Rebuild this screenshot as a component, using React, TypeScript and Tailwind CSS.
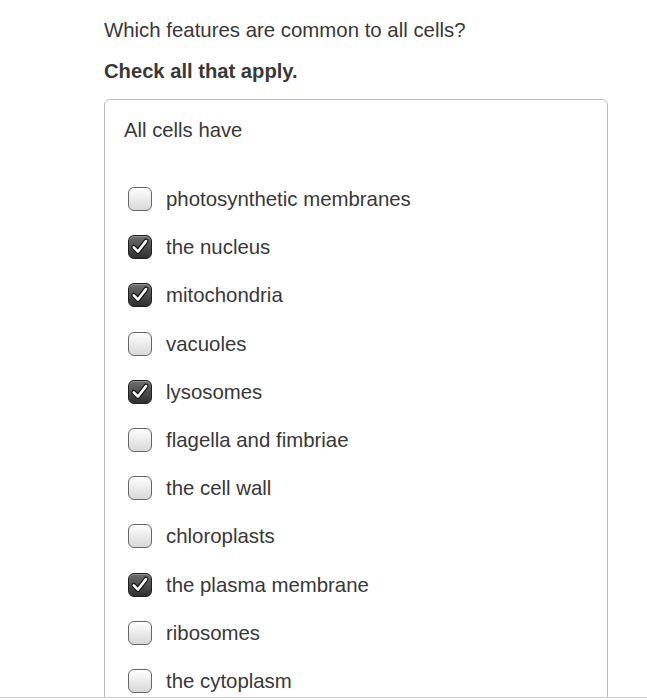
import React from 'react';

const options: { label: string; checked: boolean }[] = [
  { label: "photosynthetic membranes", checked: false },
  { label: "the nucleus", checked: true },
  { label: "mitochondria", checked: true },
  { label: "vacuoles", checked: false },
  { label: "lysosomes", checked: true },
  { label: "flagella and fimbriae", checked: false },
  { label: "the cell wall", checked: false },
  { label: "chloroplasts", checked: false },
  { label: "the plasma membrane", checked: true },
  { label: "ribosomes", checked: false },
  { label: "the cytoplasm", checked: false },
];

function Box({ checked }: { checked: boolean }) {
  if (checked) {
    return (
      <span className="relative flex h-[24px] w-[24px] shrink-0 items-center justify-center rounded-[6px] border border-[#1e1e1e] bg-gradient-to-b from-[#707070] to-[#2f2f2f] shadow-[inset_0_1px_0_rgba(255,255,255,0.25)]">
        <svg width="24" height="24" viewBox="0 0 24 24" className="block">
          <path d="M5.2 12.4 L9.8 17 L18.6 5.6" fill="none" stroke="#151515" strokeWidth="5.4" strokeLinecap="round" strokeLinejoin="round" />
          <path d="M5.2 12.4 L9.8 17 L18.6 5.6" fill="none" stroke="#fff" strokeWidth="2.8" strokeLinecap="round" strokeLinejoin="round" />
        </svg>
      </span>
    );
  }
  return (
    <span className="block h-[24px] w-[24px] shrink-0 rounded-[6px] border-[1.5px] border-[#666] bg-gradient-to-b from-[#ffffff] to-[#d8d8d8]" />
  );
}

export default function App() {
  return (
    <div className="h-[698px] overflow-hidden border-b border-[#cfcfcf] bg-white font-['Liberation_Sans',Arial,sans-serif] text-[#383838]">
      <div className="pl-[104px] pt-[18px]">
        <p className="text-[20.4px] leading-[24px]">Which features are common to all cells?</p>
        <p className="mt-[17px] text-[20.2px] font-bold leading-[24px]">Check all that apply.</p>
        <div className="mt-[16px] h-[700px] w-[504px] rounded-[6px] border border-[#bdbdbd] pl-[19px] pt-[18px]">
          <p className="text-[20.3px] leading-[24px]">All cells have</p>
          <ul className="mt-[33px] flex flex-col">
            {options.map(o => (
              <li key={o.label} className="flex h-[48.2px] items-center gap-[14px] pl-[4px]">
                <Box checked={o.checked} />
                <span className="text-[20.4px] leading-[24px]">{o.label}</span>
              </li>
            ))}
          </ul>
        </div>
      </div>
    </div>
  );
}
